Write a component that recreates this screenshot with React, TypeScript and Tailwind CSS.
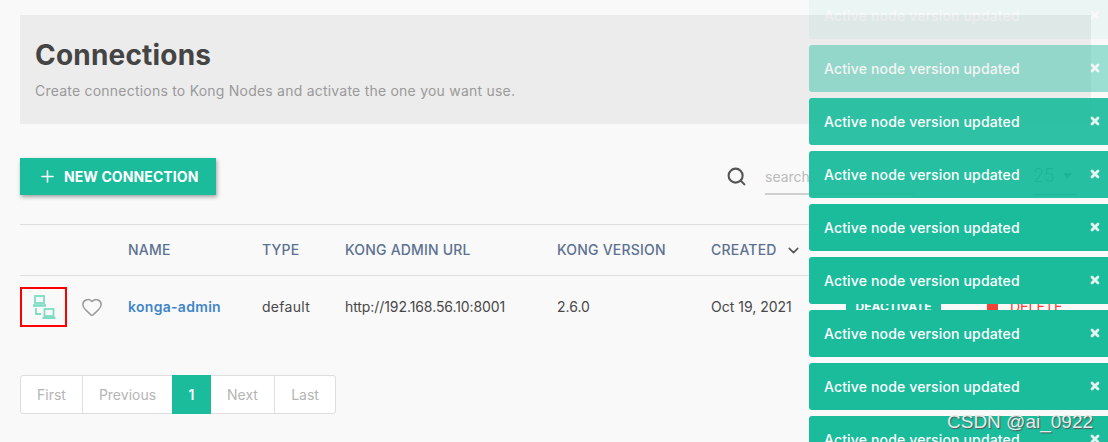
import { Search, ChevronDown, Heart, Plus, X } from "lucide-react";

function NodesIcon() {
  return (
    <svg width="24" height="24" viewBox="0 0 24 24" fill="none" stroke="#7fdcc4" strokeWidth="1.8">
      <rect x="3" y="1" width="9" height="7" />
      <path d="M1 10.5h13" strokeWidth="2.6" />
      <path d="M4 13v6h5" />
      <rect x="12.5" y="14" width="9" height="7" />
      <path d="M10.5 23h13" strokeWidth="2.6" />
    </svg>
  );
}

const toasts = [
  "opacity-[0.06]",
  "opacity-[0.42]",
  "opacity-[0.9]",
  "opacity-[0.94]",
  "opacity-100",
  "opacity-100",
  "opacity-100",
  "opacity-100",
  "opacity-100",
];

export default function App() {
  return (
    <div className="relative h-[442px] w-[1108px] overflow-hidden bg-[#f9f9f9] font-['Inter',sans-serif] text-[#484848]">
      <div className="pl-5 pr-[17px] pt-[15px]">
        <div className="h-[109px] bg-[#ececec] px-[15px] pt-[23px]">
          <h1 className="text-[28px] font-bold leading-[34px] tracking-[0.2px] text-[#444]">Connections</h1>
          <p className="mt-[9px] text-sm leading-5 tracking-[0.22px] text-[#9a9a9a]">
            Create connections to Kong Nodes and activate the one you want use.
          </p>
        </div>
      </div>

      <div className="mt-[34px] flex h-[37px] items-center pl-5">
        <button className="flex h-[37px] w-[196px] items-center gap-[7px] bg-[#1abc9c] pl-[18px] text-sm font-bold tracking-[0.1px] text-white shadow-[1px_2px_4px_rgba(0,0,0,0.35)]">
          <Plus size={19} strokeWidth={2} />
          <span>NEW CONNECTION</span>
        </button>
        <Search size={21} strokeWidth={2.4} className="ml-[510px] text-[#555]" />
        <div className="ml-[18px] h-[37px] w-[150px] border-b-2 border-[#cfcfcf] pt-[9px] text-sm text-[#bbb]">
          search...
        </div>
        <div className="ml-[118px] flex h-[37px] w-[44px] items-center justify-between border-b border-[#555] text-lg font-light text-[#444]">
          25
          <svg width="9" height="6" viewBox="0 0 9 6" className="mr-[5px]">
            <path d="M0 0h9L4.5 6z" fill="#444" />
          </svg>
        </div>
      </div>

      <div className="mt-[29px] px-5">
        <div className="grid h-[52px] grid-cols-[108px_134px_83px_212px_154px_1fr] items-center border-y border-[#dedede] text-sm font-medium tracking-[0.2px] text-[#5c7191]">
          <span />
          <span>NAME</span>
          <span>TYPE</span>
          <span>KONG ADMIN URL</span>
          <span>KONG VERSION</span>
          <span className="flex items-center gap-2">
            CREATED <ChevronDown size={17} strokeWidth={2.2} className="text-[#555]" />
          </span>
        </div>
        <div className="grid h-[62px] grid-cols-[108px_134px_83px_212px_154px_135px_141px_1fr] items-center text-sm">
          <span className="flex items-center">
            <span className="relative flex h-[40px] w-[47px] items-center justify-center">
              <NodesIcon />
              <span className="absolute inset-0 border-2 border-[#ff0000]" />
            </span>
            <Heart size={22} strokeWidth={1.6} className="ml-[14px] text-[#999]" />
          </span>
          <span className="font-semibold tracking-[0.3px] text-[#3f86c8]">konga-admin</span>
          <span className="tracking-[0.3px]">default</span>
          <span className="tracking-[-0.08px]">http://192.168.56.10:8001</span>
          <span>2.6.0</span>
          <span>Oct 19, 2021</span>
          <span className="flex h-[34px] w-[95px] items-center justify-center bg-[#1abc9c] text-xs font-bold text-white">
            DEACTIVATE
          </span>
          <span className="flex items-center gap-3 text-sm text-[#f44336]">
            <span className="h-[11px] w-[11px] bg-[#f44336]" />
            DELETE
          </span>
        </div>
      </div>

      <div className="ml-5 mt-[37px] flex h-[39px] w-fit items-stretch rounded-[3px] border border-[#dedede] bg-white text-sm text-[#b5b5b5]">
        <span className="flex w-[62px] items-center justify-center border-r border-[#dedede]">First</span>
        <span className="flex w-[89px] items-center justify-center">Previous</span>
        <span className="-my-px flex w-[39px] items-center justify-center bg-[#1abc9c] font-semibold text-white">1</span>
        <span className="flex w-[64px] items-center justify-center border-r border-[#dedede]">Next</span>
        <span className="flex w-[60px] items-center justify-center">Last</span>
      </div>

      <div className="absolute left-[809px] top-[-8px] flex w-[310px] flex-col gap-[6px]">
        {toasts.map((o, i) => (
          <div
            key={i}
            className={`flex h-[47px] shrink-0 items-center rounded-[3px] bg-[#1abc9c] pl-[15px] text-sm font-medium tracking-[0.15px] text-white ${o}`}
          >
            <span className="w-[265px]">Active node version updated</span>
            <X size={12} strokeWidth={5.5} className="-mt-[2px] text-[#e4f5f1]" />
          </div>
        ))}
      </div>

      <span className="absolute left-[947px] top-[412px] font-['Liberation_Sans',sans-serif] text-[19px] leading-5 text-[#e3eeeb] [text-shadow:1px_1px_1px_#555]">
        CSDN @ai_0922
      </span>
    </div>
  );
}
